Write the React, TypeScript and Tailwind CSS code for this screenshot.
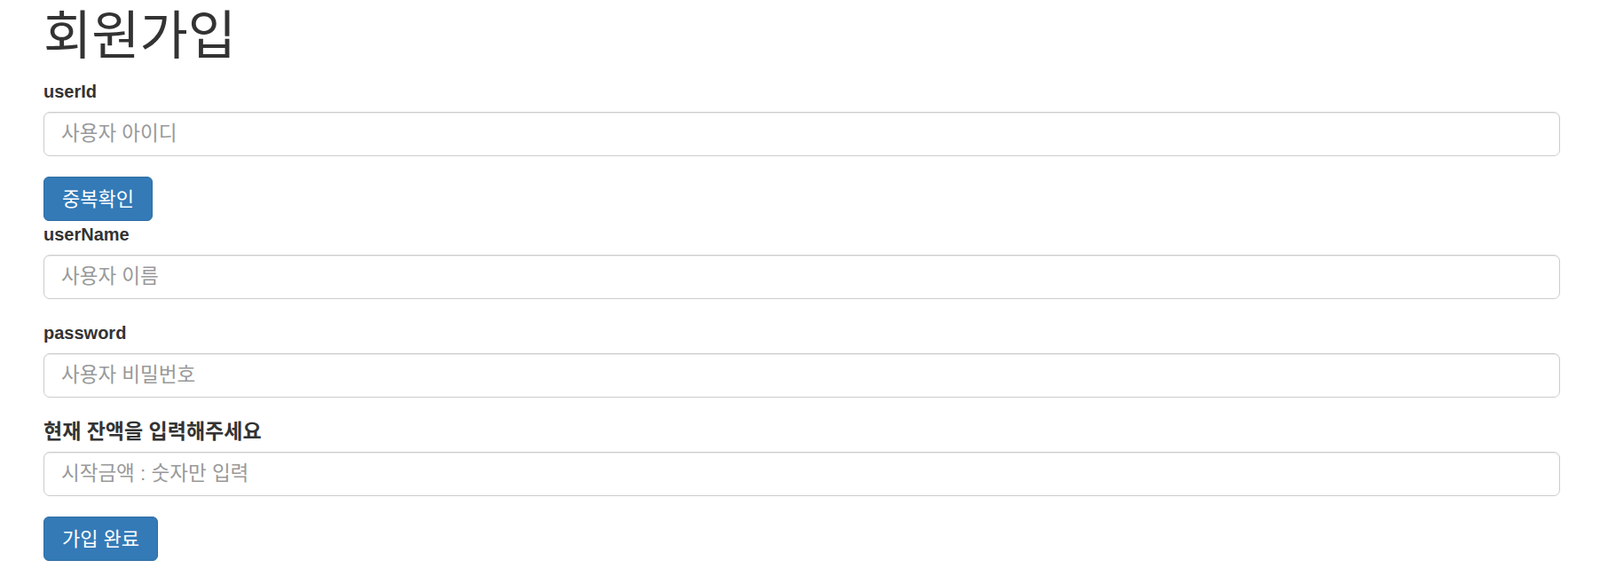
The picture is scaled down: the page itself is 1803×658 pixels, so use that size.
import React, { useState } from "react";

const font = "font-['Liberation_Sans','Noto_Sans_CJK_KR',sans-serif]";

type FieldProps = {
  label: string;
  placeholder: string;
  type?: string;
  korean?: boolean;
  value: string;
  onChange: (v: string) => void;
};

function Field({ label, placeholder, type = "text", korean, value, onChange }: FieldProps) {
  return (
    <div>
      <label
        className={`block h-[28px] leading-[28px] mb-[9px] font-bold text-[#333] ${
          korean ? "text-[23px]" : "text-[20px]"
        }`}
      >
        {label}
      </label>
      <input
        type={type}
        value={value}
        placeholder={placeholder}
        onChange={(e) => onChange(e.target.value)}
        className="block w-full h-[50px] rounded-[7px] border border-[#ccc] bg-white px-[19px] text-[22.5px] text-[#555] placeholder:text-[#999] shadow-[inset_0_1px_1px_rgba(0,0,0,0.075)] outline-none"
      />
    </div>
  );
}

function BlueButton({ children }: { children: React.ReactNode }) {
  return (
    <button className="h-[50px] rounded-[6px] border border-[#2e6da4] bg-[#337ab7] px-[20px] text-[22px] text-white">
      {children}
    </button>
  );
}

export default function App() {
  const [userId, setUserId] = useState("");
  const [userName, setUserName] = useState("");
  const [password, setPassword] = useState("");
  const [balance, setBalance] = useState("");

  return (
    <div className={`${font} bg-white min-h-[658px] pl-[49px] pr-[45px] text-[#333]`}>
      <h1 className="h-[89px] pt-[9px] text-[59px] leading-[64px] font-normal text-[#333]">회원가입</h1>

      <Field label="userId" placeholder="사용자 아이디" value={userId} onChange={setUserId} />
      <div className="mt-[23px]">
        <BlueButton>중복확인</BlueButton>
      </div>

      <div className="mt-px">
        <Field label="userName" placeholder="사용자 이름" value={userName} onChange={setUserName} />
      </div>
      <div className="mt-[24px]">
        <Field label="password" placeholder="사용자 비밀번호" type="password" value={password} onChange={setPassword} />
      </div>
      <div className="mt-[24px]">
        <Field
          label="현재 잔액을 입력해주세요"
          placeholder="시작금액 : 숫자만 입력"
          korean
          value={balance}
          onChange={setBalance}
        />
      </div>

      <div className="mt-[23px]">
        <BlueButton>가입 완료</BlueButton>
      </div>
    </div>
  );
}
